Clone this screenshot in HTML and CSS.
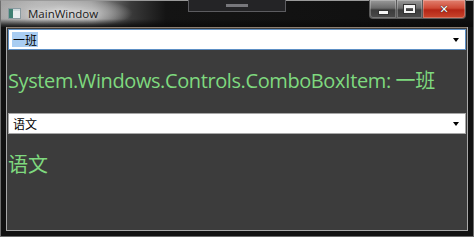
FILE: index.html
```html
<!DOCTYPE html>
<html>
<head>
<meta charset="utf-8">
<link rel="stylesheet" href="styles.css">
</head>
<body>
<div class="window">
  <div class="titlebar">
    <span class="app-icon">
      <svg width="13" height="11" viewBox="0 0 13 11">
        <rect x="0.5" y="0.5" width="12" height="10" fill="#e8ecee" stroke="#8a9aa0"/>
        <rect x="1" y="1" width="4" height="9" fill="#3f7f72"/>
        <rect x="5" y="1" width="7" height="2" fill="#cfd8dc"/>
      </svg>
    </span>
    <span class="title">MainWindow</span>
    <span class="spacer"></span>
    <div class="caption-buttons">
      <div class="cap cap-min"><span class="glyph-min"></span></div>
      <div class="cap cap-max"><span class="glyph-max"></span></div>
      <div class="cap cap-close"><span class="glyph-close">✕</span></div>
    </div>
    <div class="snap-tab"><span class="snap-bar"></span></div>
  </div>
  <div class="client">
    <div class="combo combo-focused">
      <span class="value selected">一班</span>
      <span class="arrow"></span>
    </div>
    <div class="output out-first">System.Windows.Controls.ComboBoxItem: 一班</div>
    <div class="combo">
      <span class="value">语文</span>
      <span class="arrow"></span>
    </div>
    <div class="output out-second">语文</div>
  </div>
</div>
</body>
</html>
```

FILE: styles.css
```css
html, body {
  margin: 0;
  padding: 0;
  background: #ffffff;
}
body {
  width: 474px;
  height: 237px;
  overflow: hidden;
  font-family: "Open Sans", "Noto Sans CJK SC", sans-serif;
}
.window {
  box-sizing: border-box;
  width: 474px;
  height: 237px;
  display: flex;
  flex-direction: column;
  background: #121212;
  border: 1px solid #6e6e6e;
  border-top-color: #9a9a9a;
  padding: 0 6px 6px 6px;
}
.titlebar {
  position: relative;
  height: 26px;
  margin: 0 -6px;
  padding: 0 7px 0 7px;
  display: flex;
  align-items: flex-start;
  background:
    linear-gradient(to bottom, rgba(0,0,0,0) 0, rgba(0,0,0,0) 18px, rgba(10,10,10,0.75) 24px, rgba(10,10,10,0.9) 26px),
    radial-gradient(ellipse 70px 16px at 62px 12px, rgba(215,215,215,0.95) 0, rgba(190,190,190,0.7) 55%, rgba(190,190,190,0) 100%),
    linear-gradient(to right, #a4a4a4 0, #b4b4b4 40px, #9a9a9a 90px, #3a3a3a 130px, #141414 165px, #0f0f0f 100%);
}
.app-icon {
  display: flex;
  margin-top: 7px;
  margin-right: 7px;
}
.title {
  font-family: "Open Sans", sans-serif;
  font-size: 11.5px;
  line-height: 14px;
  margin-top: 6px;
  color: #1a1a1a;
  text-shadow: 0 0 6px rgba(255,255,255,0.8);
}
.spacer { flex: 1; }
.caption-buttons {
  display: flex;
  height: 19px;
  margin-top: -1px;
}
.cap {
  box-sizing: border-box;
  height: 19px;
  display: flex;
  align-items: center;
  justify-content: center;
  border: 1px solid #5a5a5a;
  border-top: none;
  box-shadow: inset 0 0 0 1px rgba(255,255,255,0.25);
}
.cap-min {
  width: 27px;
  border-bottom-left-radius: 4px;
  border-right: none;
  background: linear-gradient(to bottom, #9a9a9a 0, #6a6a6a 45%, #3c3c3c 55%, #4a4a4a 100%);
}
.cap-max {
  width: 26px;
  border-right: none;
  background: linear-gradient(to bottom, #9a9a9a 0, #6a6a6a 45%, #3c3c3c 55%, #4a4a4a 100%);
}
.cap-close {
  width: 44px;
  border-bottom-right-radius: 4px;
  background: linear-gradient(to bottom, #e1806f 0, #cf4a36 45%, #b42616 55%, #c9452c 100%);
}
.glyph-min {
  display: block;
  width: 9px;
  height: 3px;
  margin-top: 6px;
  background: #f4f4f4;
  border: 1px solid #333;
}
.glyph-max {
  display: block;
  box-sizing: border-box;
  width: 11px;
  height: 8px;
  border: 2px solid #f4f4f4;
  border-top-width: 3px;
  outline: 1px solid #333;
}
.glyph-close {
  font-family: "DejaVu Sans", sans-serif;
  font-weight: bold;
  font-size: 11px;
  line-height: 11px;
  color: #ffffff;
  text-shadow: 0 0 1px #222, 0 0 1px #222;
}
.snap-tab {
  position: absolute;
  left: 187px;
  top: -1px;
  width: 98px;
  height: 12px;
  box-sizing: border-box;
  background: #242426;
  border: 1px solid #5c5c60;
  border-top: none;
  display: flex;
  justify-content: center;
  align-items: center;
}
.snap-bar {
  display: block;
  width: 22px;
  height: 3px;
  background: #77777b;
}
.client {
  flex: 1;
  background: #3c3c3c;
  border-top: 1px solid #8c7f72;
  outline: 1px solid #a8a8a8;
  padding: 1px 1px 0 1px;
  display: flex;
  flex-direction: column;
}
.combo {
  box-sizing: border-box;
  height: 21px;
  background: #ffffff;
  border: 1px solid #a6a6a6;
  display: flex;
  align-items: center;
  padding: 0 6px 0 3px;
}
.combo-focused {
  border-color: #5d8fc4;
}
.value {
  font-family: "Noto Sans CJK SC", sans-serif;
  font-size: 12px;
  line-height: 15px;
  color: #000000;
  padding: 0 1px;
}
.selected {
  background: #a9cdf2;
}
.spacer, .combo .value { }
.arrow {
  margin-left: auto;
  width: 0;
  height: 0;
  border-left: 3px solid transparent;
  border-right: 3px solid transparent;
  border-top: 4px solid #000000;
}
.output {
  font-family: "Open Sans", "Noto Sans CJK SC", sans-serif;
  font-size: 20px;
  color: #7fd97f;
  line-height: 28px;
  white-space: nowrap;
}
.out-first {
  margin-top: 17px;
  margin-bottom: 18px;
  letter-spacing: -0.4px;
}
.out-second {
  font-family: "Noto Sans CJK SC", sans-serif;
  margin-top: 16px;
}
```
